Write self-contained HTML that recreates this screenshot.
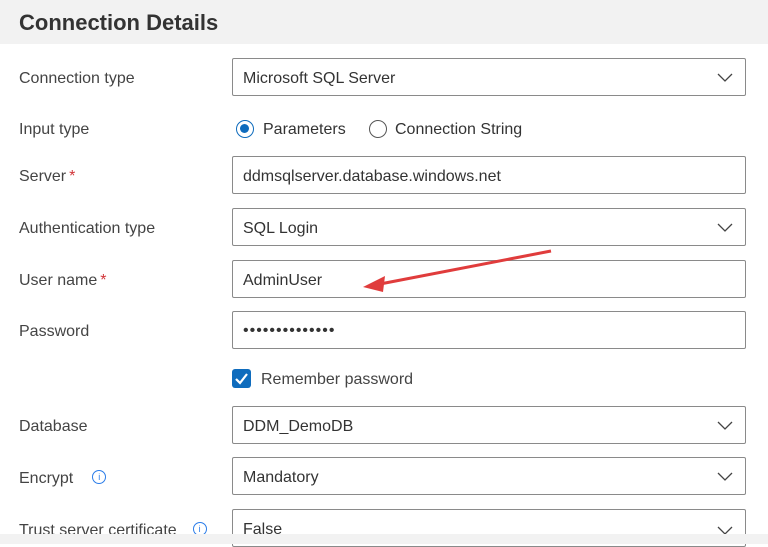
<!DOCTYPE html>
<html><head><style>
body{margin:0;width:768px;height:544px;overflow:hidden;background:#fff;font-family:"Liberation Sans",sans-serif;position:relative;color:#3b3b3b}
.hd{position:absolute;left:0;top:0;width:768px;height:44px;background:#f2f2f2}
.hd span{position:absolute;left:19px;top:10px;font-size:22px;font-weight:bold;color:#333}
.lb{position:absolute;left:19px;font-size:16px;color:#444}
.req{color:#d13438;margin-left:3px}
.f{position:absolute;left:232px;width:512px;height:36px;border:1px solid #8a8a8a;border-radius:2px}
.f span{position:absolute;left:10px;top:11px;font-size:16px;color:#333}
.chev{position:absolute;right:12px;top:14px}
.info{display:inline-block;width:12px;height:12px;border:1px solid #2b7de9;border-radius:50%;color:#2b7de9;font-size:9px;line-height:12px;text-align:center;vertical-align:3px}
.bot{position:absolute;left:0;top:534px;width:768px;height:10px;background:#f2f2f2}
</style></head><body>
<div class="hd"><span>Connection Details</span></div>
<div class="lb" style="top:70px">Connection type</div>
<div class="f" style="top:58px"><span>Microsoft SQL Server</span><svg class="chev" width="16" height="10"><path d="M1 1l7 7 7-7" fill="none" stroke="#444" stroke-width="1.3"/></svg></div>
<div class="lb" style="top:121px">Input type</div>
<div style="position:absolute;left:236px;top:120px;width:18px;height:18px;border:1.5px solid #0f6cbd;border-radius:50%;box-sizing:border-box"><div style="position:absolute;left:3px;top:3px;width:9px;height:9px;border-radius:50%;background:#0f6cbd"></div></div>
<div class="lb" style="left:263px;top:121px;color:#333">Parameters</div>
<div style="position:absolute;left:369px;top:120px;width:18px;height:18px;border:1.5px solid #555;border-radius:50%;box-sizing:border-box"></div>
<div class="lb" style="left:395px;top:121px;color:#333">Connection String</div>
<div class="lb" style="top:168px">Server<span class="req">*</span></div>
<div class="f" style="top:156px"><span>ddmsqlserver.database.windows.net</span></div>
<div class="lb" style="top:220px">Authentication type</div>
<div class="f" style="top:208px"><span>SQL Login</span><svg class="chev" width="16" height="10"><path d="M1 1l7 7 7-7" fill="none" stroke="#444" stroke-width="1.3"/></svg></div>
<div class="lb" style="top:272px">User name<span class="req">*</span></div>
<div class="f" style="top:260px"><span>AdminUser</span></div>
<div class="lb" style="top:323px">Password</div>
<div class="f" style="top:311px"><span style="letter-spacing:1px;top:10px">••••••••••••••</span></div>
<div style="position:absolute;left:232px;top:369px;width:19px;height:19px;background:#0f6cbd;border-radius:3px"><svg width="19" height="19"><path d="M4 10l4 4 7-9" fill="none" stroke="#fff" stroke-width="2.2"/></svg></div>
<div class="lb" style="left:261px;top:371px">Remember password</div>
<div class="lb" style="top:418px">Database</div>
<div class="f" style="top:406px"><span>DDM_DemoDB</span><svg class="chev" width="16" height="10"><path d="M1 1l7 7 7-7" fill="none" stroke="#444" stroke-width="1.3"/></svg></div>
<div class="lb" style="top:470px">Encrypt<span class="info" style="margin-left:19px">i</span></div>
<div class="f" style="top:457px"><span>Mandatory</span><svg class="chev" width="16" height="10"><path d="M1 1l7 7 7-7" fill="none" stroke="#444" stroke-width="1.3"/></svg></div>
<div class="lb" style="top:522px">Trust server certificate<span class="info" style="margin-left:16px">i</span></div>
<div class="f" style="top:509px"><span>False</span><svg class="chev" width="16" height="10" style="top:16px"><path d="M1 1l7 7 7-7" fill="none" stroke="#444" stroke-width="1.3"/></svg></div>
<div class="bot"></div>
<svg style="position:absolute;left:0;top:0" width="768" height="544"><path d="M551 251L380 284" stroke="#e03c3c" stroke-width="3" fill="none"/><path d="M363 287L385 276L383 292Z" fill="#e03c3c"/></svg>
</body></html>
